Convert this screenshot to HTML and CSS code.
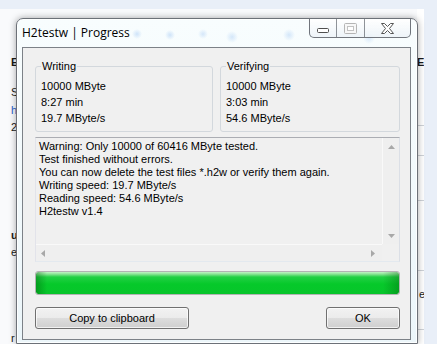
FILE: index.html
```html
<!DOCTYPE html>
<html lang="en">
<head>
    <meta charset="UTF-8">
    <meta name="viewport" content="width=device-width, initial-scale=1.0">
    <title>H2testw | Progress</title>
    <link rel="stylesheet" href="styles.css">
</head>
<body>
    <div class="desktop">
        <div class="backapp">
            <div class="backapp-left">
                <p class="frag frag-bold frag-e">E</p>
                <p class="frag frag-s">S</p>
                <p class="frag frag-h">h</p>
                <p class="frag frag-2">2</p>
                <p class="frag frag-bold frag-u">u</p>
                <p class="frag frag-e2">e</p>
                <p class="frag frag-r">r</p>
            </div>
            <div class="backapp-right">
                <p class="frag frag-bold frag-e">E</p>
                <div class="rule rule-1"></div>
                <div class="rule rule-2"></div>
                <div class="rule rule-3"></div>
                <div class="rule rule-4"></div>
                <p class="frag frag-te">e</p>
                <div class="rule rule-5"></div>
            </div>
        </div>

        <div class="window">
            <div class="caption">
                <span class="caption-title">H2testw | Progress</span>
                <div class="caption-buttons">
                    <span class="cbtn cbtn-min">
                        <svg width="12" height="5" viewBox="0 0 12 5"><rect x="0.5" y="0.5" width="11" height="4" rx="1" fill="#fff" stroke="#4f4f4f"/></svg>
                    </span>
                    <span class="cbtn cbtn-max">
                        <svg width="13" height="11" viewBox="0 0 13 11"><rect x="0.5" y="0.5" width="12" height="10" rx="1" fill="#f7f7f7" stroke="#b5b5b5"/><rect x="3.5" y="3.5" width="6" height="4" fill="#fff" stroke="#c2c2c2"/></svg>
                    </span>
                    <span class="cbtn cbtn-close">
                        <svg width="13" height="11" viewBox="0 0 13 11"><polygon points="0.5,0.5 3.5,0.5 6.5,3.5 9.5,0.5 12.5,0.5 8.5,5.5 12.5,10.5 9.5,10.5 6.5,7.5 3.5,10.5 0.5,10.5 4.5,5.5" fill="#fff" stroke="#555"/></svg>
                    </span>
                </div>
            </div>

            <div class="client">
                <div class="groups">
                    <fieldset class="group group-write">
                        <legend>Writing</legend>
                        <div class="group-line">10000 MByte</div>
                        <div class="group-line">8:27 min</div>
                        <div class="group-line">19.7 MByte/s</div>
                    </fieldset>
                    <fieldset class="group group-verify">
                        <legend>Verifying</legend>
                        <div class="group-line">10000 MByte</div>
                        <div class="group-line">3:03 min</div>
                        <div class="group-line">54.6 MByte/s</div>
                    </fieldset>
                </div>

                <div class="log">
                    <div class="log-text">Warning: Only 10000 of 60416 MByte tested.
Test finished without errors.
You can now delete the test files *.h2w or verify them again.
Writing speed: 19.7 MByte/s
Reading speed: 54.6 MByte/s
H2testw v1.4</div>
                    <div class="vscroll">
                        <svg width="7" height="4" viewBox="0 0 7 4"><polygon points="3.5,0 7,4 0,4" fill="#a8a8a8"/></svg>
                        <svg width="7" height="4" viewBox="0 0 7 4"><polygon points="0,0 7,0 3.5,4" fill="#a8a8a8"/></svg>
                    </div>
                    <div class="hscroll">
                        <svg width="4" height="7" viewBox="0 0 4 7"><polygon points="0,3.5 4,0 4,7" fill="#a8a8a8"/></svg>
                        <svg width="4" height="7" viewBox="0 0 4 7"><polygon points="0,0 4,3.5 0,7" fill="#a8a8a8"/></svg>
                    </div>
                    <div class="corner"></div>
                </div>

                <div class="progress">
                    <div class="progress-fill" style="width: 100%"></div>
                </div>

                <div class="actions">
                    <button class="btn btn-copy">Copy to clipboard</button>
                    <button class="btn btn-ok">OK</button>
                </div>
            </div>
        </div>
    </div>
</body>
</html>
```

FILE: styles.css
```css
* {
    box-sizing: border-box;
    margin: 0;
    padding: 0;
}

body {
    width: 437px;
    height: 344px;
    overflow: hidden;
    font-family: "Liberation Sans", Arial, sans-serif;
    font-size: 11px;
    color: #000;
    background-color: #e9eff8;
}

.desktop {
    position: relative;
    height: 344px;
    padding-top: 9px;
}

/* the program behind the dialog */
.backapp {
    display: flex;
    width: 424px;
    height: 335px;
    background-color: #f9fafc;
}

.backapp-left {
    width: 417px;
    padding-left: 11px;
}

.backapp-right {
    width: 7px;
    overflow: hidden;
    background-color: #fff;
}

.frag {
    height: 13px;
    line-height: 13px;
    white-space: nowrap;
    color: #1a1a1a;
}

.frag-bold {
    font-weight: bold;
}

.frag-e {
    margin-top: 47px;
}

.frag-s {
    margin-top: 17px;
}

.frag-h {
    margin-top: 5px;
    color: #2b63c9;
}

.frag-2 {
    margin-top: 4px;
}

.frag-u {
    margin-top: 95px;
}

.frag-e2 {
    margin-top: 4px;
}

.frag-r {
    margin-top: 73px;
}

.frag-te {
    margin-top: 17px;
    padding-left: 2px;
}

.rule {
    height: 1px;
    background-color: #cfd3d8;
}

.rule-1 { margin-top: 56px; }
.rule-2 { margin-top: 29px; }
.rule-3 { margin-top: 44px; }
.rule-4 { margin-top: 69px; }
.rule-5 { margin-top: 28px; }

/* dialog window */
.window {
    position: absolute;
    left: 16px;
    top: 18px;
    width: 402px;
    height: 326px;
    padding: 0 6px 3px 5px;
    border: 1px solid #6c7178;
    border-radius: 7px 7px 0 0;
    background:
        radial-gradient(circle at 120px 15px, rgba(130, 180, 240, 0.35), transparent 5px),
        radial-gradient(circle at 153px 16px, rgba(130, 180, 240, 0.35), transparent 5px),
        radial-gradient(circle at 186px 15px, rgba(130, 180, 240, 0.3), transparent 5px),
        radial-gradient(circle at 215px 18px, rgba(130, 180, 240, 0.3), transparent 6px),
        radial-gradient(circle at 272px 16px, rgba(130, 180, 240, 0.3), transparent 6px),
        radial-gradient(circle at 352px 19px, rgba(130, 180, 240, 0.25), transparent 6px),
        linear-gradient(#f8fdfe, #ecf6fa);
    box-shadow: 0 0 7px rgba(0, 0, 0, 0.35), inset 0 0 0 1px rgba(255, 255, 255, 0.85);
}

.caption {
    display: flex;
    height: 28px;
}

.caption-title {
    padding-top: 6px;
    font-family: "Open Sans", "Noto Sans", sans-serif;
    font-size: 12px;
    line-height: 16px;
    color: #000;
}

.caption-buttons {
    display: flex;
    height: 19px;
    margin-left: auto;
    border: 1px solid rgba(55, 60, 70, 0.7);
    border-top: none;
    border-radius: 0 0 5px 5px;
    overflow: hidden;
    background: linear-gradient(rgba(255, 255, 255, 0.95), rgba(236, 243, 248, 0.9));
}

.cbtn {
    display: flex;
    justify-content: center;
    align-items: center;
    height: 18px;
}

.cbtn-min {
    width: 26px;
    padding-top: 5px;
}

.cbtn-max {
    width: 28px;
    border-left: 1px solid rgba(55, 60, 70, 0.55);
}

.cbtn-close {
    width: 46px;
    padding-top: 1px;
    border-left: 1px solid rgba(55, 60, 70, 0.55);
}

.cbtn svg {
    display: block;
}

.client {
    display: flex;
    flex-direction: column;
    height: 293px;
    padding: 12px 10px 10px 12px;
    border: 1px solid #7c8187;
    background-color: #f0f0f0;
}

.groups {
    display: flex;
    gap: 7px;
}

.group {
    min-width: 0;
    padding: 6px 5px 5px;
    border: 1px solid #d3d8dd;
    border-radius: 3px;
}

.group-write {
    width: 178px;
}

.group-verify {
    width: 180px;
}

.group legend {
    padding: 0 1px;
    line-height: 12px;
}

.group-line {
    line-height: 16px;
    white-space: nowrap;
}

.log {
    display: grid;
    grid-template-columns: 1fr 17px;
    grid-template-rows: 1fr 17px;
    height: 125px;
    margin-top: 5px;
    border: 1px solid;
    border-color: #abadb3 #dbdfe6 #e3e9ef #e2e3ea;
    background-color: #f0f0f0;
}

.log-text {
    padding: 2px 3px;
    line-height: 13px;
    white-space: pre;
    overflow: hidden;
}

.vscroll {
    display: flex;
    flex-direction: column;
    justify-content: space-between;
    align-items: center;
    padding: 7px 0 6px;
    border-left: 1px solid #f9f9f9;
    background-color: #efefef;
}

.hscroll {
    display: flex;
    justify-content: space-between;
    align-items: center;
    padding: 0 7px 0 5px;
    border-top: 1px solid #f9f9f9;
    background-color: #efefef;
}

.vscroll svg, .hscroll svg {
    display: block;
}

.corner {
    background-color: #f0f0f0;
}

.progress {
    height: 24px;
    margin-top: 9px;
    border: 1px solid #b3b3b3;
    border-radius: 3px;
    background-color: #e6e6e6;
    overflow: hidden;
}

.progress-fill {
    height: 100%;
    border-radius: 2px;
    background:
        linear-gradient(to right, rgba(0, 90, 10, 0.4), rgba(0, 90, 10, 0) 11px, rgba(0, 90, 10, 0) calc(100% - 16px), rgba(0, 90, 10, 0.35)),
        linear-gradient(#c3f3c6 0, #8ee597 2px, #22d044 5px, #06c92a 55%, #07c52b 100%);
}

.actions {
    display: flex;
    justify-content: space-between;
    margin-top: 12px;
}

.btn {
    height: 22px;
    border: 1px solid #707070;
    border-radius: 3px;
    background: linear-gradient(#f2f2f2 0%, #ebebeb 50%, #dddddd 50%, #cfcfcf 100%);
    box-shadow: inset 0 0 0 1px rgba(255, 255, 255, 0.7);
    font-family: inherit;
    font-size: 11px;
    color: #000;
}

.btn-copy {
    width: 154px;
}

.btn-ok {
    width: 74px;
}
```
